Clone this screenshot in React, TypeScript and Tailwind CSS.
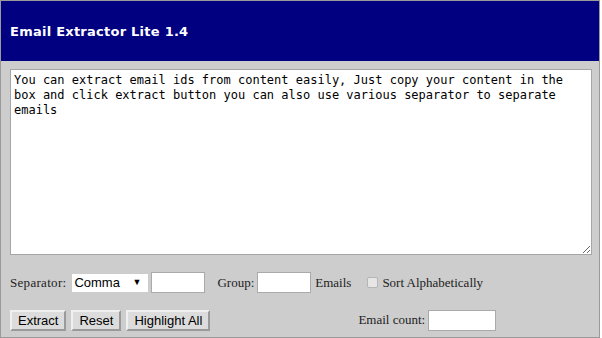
export default function App() {
  return (
    <div className="w-[600px] h-[338px] overflow-hidden border border-[#9a9a9a] bg-[#cdcdcd] font-['Liberation_Serif',serif]">
      <div className="h-[60px] bg-[#000080] flex items-center px-[9px] pt-[1px]">
        <h1 className="text-white font-bold text-[13px] tracking-[0.25px] font-['DejaVu_Sans',sans-serif]">Email Extractor Lite 1.4</h1>
      </div>

      <div className="px-[9px] pt-[8px]">
        <textarea
          className="block w-[582px] h-[186px] bg-white border border-[#a6a6a6] px-[3px] py-[3px] text-[12px] leading-[15px] text-black font-['DejaVu_Sans_Mono',monospace] outline-none"
          defaultValue="You can extract email ids from content easily, Just copy your content in the box and click extract button you can also use various separator to separate emails"
        />

        <div className="flex items-center mt-[17px] h-[21px] text-[13px] text-[#222]">
          <span className="tracking-[0.3px]">Separator:</span>
          <div className="ml-[5px] w-[78px] h-[20px] bg-white border border-[#ccc] flex items-center justify-between pl-[2px] pr-[7px] font-['Liberation_Sans',sans-serif] text-[13px] text-black">
            <span>Comma</span>
            <span className="text-[9px]">▼</span>
          </div>
          <input className="ml-[2px] w-[54px] h-[21px] bg-white border border-[#aaa]" />
          <span className="ml-[12px]">Group:</span>
          <input className="ml-[3px] w-[54px] h-[21px] bg-white border border-[#aaa]" />
          <span className="ml-[4px]">Emails</span>
          <span className="ml-[16px] w-[11px] h-[11px] rounded-[2px] border border-[#b5b5b5] bg-[#e6e6e6]" />
          <span className="ml-[4px]">Sort Alphabetically</span>
        </div>

        <div className="flex items-center mt-[16px] h-[22px]">
          <button className="h-[21px] px-[6px] bg-[#dcdcdc] border-2 border-t-[#f0f0f0] border-l-[#f0f0f0] border-r-[#9a9a9a] border-b-[#9a9a9a] text-[13px] text-black font-['Liberation_Sans',sans-serif] leading-none">Extract</button>
          <button className="ml-[5px] h-[21px] px-[6px] bg-[#dcdcdc] border-2 border-t-[#f0f0f0] border-l-[#f0f0f0] border-r-[#9a9a9a] border-b-[#9a9a9a] text-[13px] text-black font-['Liberation_Sans',sans-serif] leading-none">Reset</button>
          <button className="ml-[5px] h-[21px] px-[6px] bg-[#dcdcdc] border-2 border-t-[#f0f0f0] border-l-[#f0f0f0] border-r-[#9a9a9a] border-b-[#9a9a9a] text-[13px] text-black font-['Liberation_Sans',sans-serif] leading-none">Highlight All</button>
          <span className="ml-[148px] text-[13px] text-[#222]">Email count:</span>
          <input className="ml-[3px] w-[68px] h-[21px] bg-white border border-[#aaa]" />
        </div>
      </div>
    </div>
  );
}
